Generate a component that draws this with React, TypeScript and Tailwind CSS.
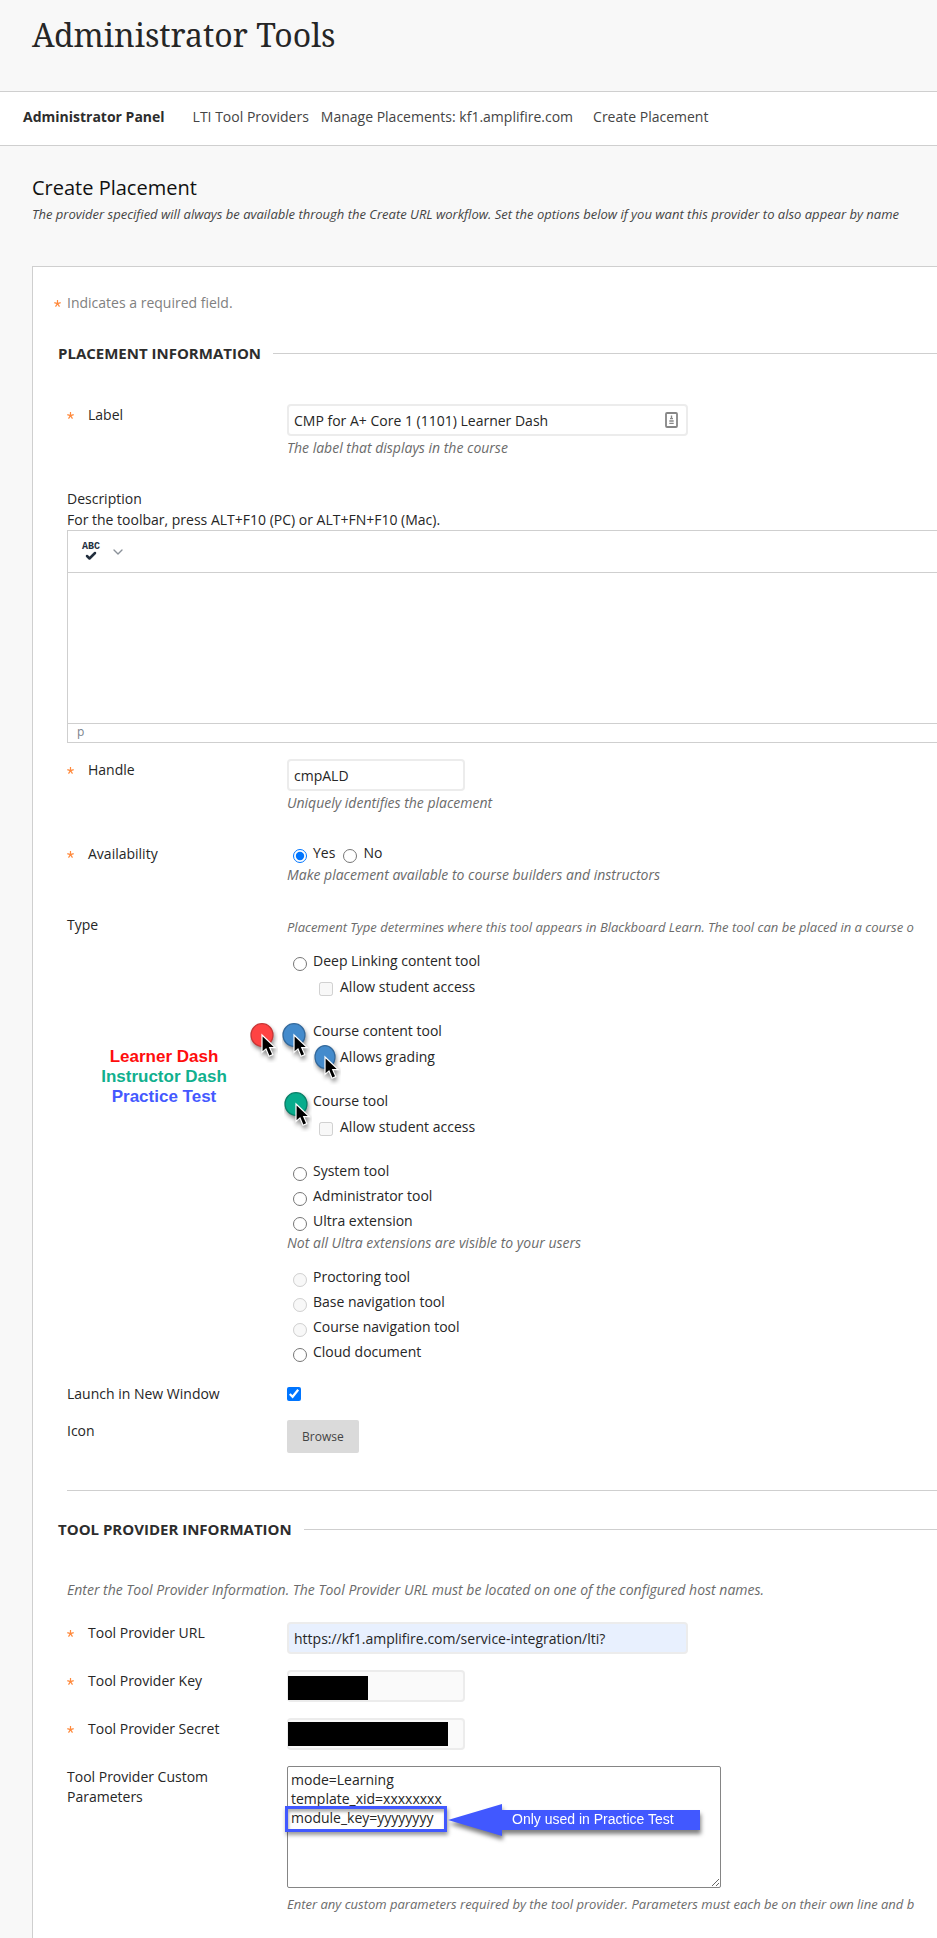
import { ReactNode } from "react";
import { Check, ChevronDown } from "lucide-react";

const inputClass =
  "block h-8 rounded border-2 border-[#ececec] px-[5px] text-sm text-[#262626] outline-none";

function Star() {
  return (
    <svg width="7" height="7" viewBox="0 0 7 7" className="shrink-0" role="img" aria-label="required">
      <path d="M3.5 0v3.6M0.3 2.6l3.2 1M6.7 2.6l-3.2 1M1.5 6.6l2-3M5.5 6.6l-2-3" stroke="#ff8a3d" strokeWidth="1.2" />
    </svg>
  );
}

function Row({ label, htmlFor, required, className, children }: { label: string; htmlFor?: string; required?: boolean; className?: string; children: ReactNode }) {
  return (
    <div className={`flex ${className ?? ""}`}>
      <label htmlFor={htmlFor} className="flex w-[220px] shrink-0 pt-px">
        {required && (
          <span className="flex h-5 w-[21px] shrink-0 items-center">
            <Star />
          </span>
        )}
        <span className="w-[170px]">{label}</span>
      </label>
      <div className="min-w-0 flex-1">{children}</div>
    </div>
  );
}

function Help({ children, small }: { children: ReactNode; small?: boolean }) {
  return <p className={`mt-0.5 whitespace-nowrap italic text-[#6b6b6b] ${small ? "text-[13px] leading-5" : ""}`}>{children}</p>;
}

function SectionTitle({ children }: { children: ReactNode }) {
  return (
    <div className="ml-[25px] flex items-center gap-3">
      <h3 className="text-[15px] font-bold text-[#2d2d2d]">{children}</h3>
      <div className="h-px flex-1 bg-[#cfcfcf]" />
    </div>
  );
}

function Radio({ label, name = "type", disabled, checked, marker }: { label: string; name?: string; disabled?: boolean; checked?: boolean; marker?: ReactNode }) {
  return (
    <label className="relative flex h-5 items-center gap-1.5 pl-1.5">
      <input
        type="radio"
        name={name}
        disabled={disabled}
        defaultChecked={checked}
        className={`mt-[5px] size-[14px] accent-[#0075ff] ${marker ? "opacity-0" : ""}`}
      />
      {label}
      {marker}
    </label>
  );
}

function SubCheck({ label, marker }: { label: string; marker?: ReactNode }) {
  return (
    <label className="relative mt-1.5 flex h-5 items-center gap-[7px] pl-8">
      <input type="checkbox" disabled={!marker} className={`mt-[3px] size-[14px] ${marker ? "opacity-0" : ""}`} />
      {label}
      {marker}
    </label>
  );
}

// Click marker: coloured dot with a mouse pointer on it
function Marker({ fill, stroke, rx = 11, className }: { fill: string; stroke: string; rx?: number; className: string }) {
  return (
    <svg width="28" height="40" viewBox="0 0 28 40" aria-hidden="true" className={`absolute ${className}`}>
      <g className="drop-shadow-[1px_3px_2px_rgba(0,0,0,0.45)]">
        <ellipse cx="12" cy="12" rx={rx} ry="11.3" fill={fill} stroke={stroke} strokeWidth="1.2" />
        <path d="M12 12v17.5l4-3.6 3 7.4 3.8-1.7-3.1-7h5.5z" fill="#000" stroke="#fff" strokeWidth="1.2" />
      </g>
    </svg>
  );
}

export default function App() {
  return (
    <div className="flex min-h-screen flex-col overflow-hidden bg-[#f8f8f8] font-['Open_Sans',sans-serif] text-sm leading-5 text-[#262626]">
      {/* Header */}
      <header className="border-b border-[#cfcfcf] px-8 pt-[11px] pb-8">
        <h1 className="font-['Noto_Serif','DejaVu_Serif_Condensed','DejaVu_Serif',serif] text-[32px] leading-[48px]">Administrator Tools</h1>
      </header>

      {/* Breadcrumb */}
      <nav className="flex border-b border-[#cfcfcf] bg-white px-[23px] pt-[15px] pb-[18px] whitespace-nowrap text-[#444]">
        <a href="#" className="mr-7 font-bold text-[#2d2d2d]">Administrator Panel</a>
        <a href="#" className="mr-3">LTI Tool Providers</a>
        <a href="#" className="mr-5">Manage Placements: kf1.amplifire.com</a>
        <a href="#">Create Placement</a>
      </nav>

      <main className="flex flex-1 flex-col pt-7 pl-8">
        <h2 className="text-xl leading-7 text-[#111]">Create Placement</h2>
        <p className="mt-0.5 text-[13px] leading-5 whitespace-nowrap italic text-[#444]">
          The provider specified will always be available through the Create URL workflow. Set the options below if you want this provider to also appear by name
        </p>

        <form className="mt-[42px] flex-1 border-t border-l border-[#cfcfcf] bg-white pt-[26px] pb-5">
          <p className="ml-[21px] flex items-center gap-1.5 text-[#808080]">
            <Star />
            Indicates a required field.
          </p>

          {/* Placement information */}
          <div className="mt-[30px]">
            <SectionTitle>PLACEMENT INFORMATION</SectionTitle>
          </div>
          <div className="mt-[41px] pl-[34px]">
            <Row label="Label" htmlFor="label" required>
              <div className="relative w-[401px]">
                <input id="label" defaultValue="CMP for A+ Core 1 (1101) Learner Dash" className={`${inputClass} w-full bg-white`} />
                <svg width="13" height="16" viewBox="0 0 13 16" className="absolute top-2 right-2.5" aria-hidden="true">
                  <rect x="1" y="1" width="11" height="14" rx="1" fill="#fff" stroke="#868686" strokeWidth="1.8" />
                  <path d="M6.5 3.5v3M5 6.6h3M4.3 9h4.4M4.3 11.4h4.4" stroke="#868686" strokeWidth="1.4" />
                </svg>
              </div>
              <Help>The label that displays in the course</Help>
            </Row>

            <div className="mt-[31px]">
              <label htmlFor="description">Description</label>
              <p className="mt-px">For the toolbar, press ALT+F10 (PC) or ALT+FN+F10 (Mac).</p>
              <div className="border border-r-0 border-[#cfcfcf]">
                <div className="flex h-[42px] items-center gap-2.5 border-b border-[#cfcfcf] pl-3.5">
                  <button type="button" className="flex flex-col items-center text-[#222f3e]">
                    <span className="font-['Liberation_Mono',monospace] text-[10px] leading-[9px] font-bold">ABC</span>
                    <Check size={12} strokeWidth={5} className="-mt-px" />
                  </button>
                  <button type="button" aria-label="More spelling options">
                    <ChevronDown size={16} className="text-[#8a9199]" />
                  </button>
                </div>
                <textarea id="description" className="block h-[150px] w-full resize-none outline-none" />
                <div className="h-[19px] border-t border-[#cfcfcf] pl-[9px] text-xs leading-[16px] text-[#7a828c]">p</div>
              </div>
            </div>

            <Row label="Handle" htmlFor="handle" required className="mt-4">
              <input id="handle" defaultValue="cmpALD" className={`${inputClass} w-[178px] bg-white`} />
              <Help>Uniquely identifies the placement</Help>
            </Row>

            <Row label="Availability" required className="mt-[30px]">
              <div className="flex gap-0.5">
                <Radio label="Yes" name="availability" checked />
                <Radio label="No" name="availability" />
              </div>
              <Help>Make placement available to course builders and instructors</Help>
            </Row>

            <div className="mt-[30px] flex">
              <div className="w-[220px] shrink-0">
                <p>Type</p>
                <div className="mt-[112px] w-[194px] text-center font-['Liberation_Sans',sans-serif] text-[17px] leading-5 font-bold">
                  <p className="text-[#ff0d0d]">Learner Dash</p>
                  <p className="text-[#10b08e]">Instructor Dash</p>
                  <p className="text-[#4459ff]">Practice Test</p>
                </div>
              </div>
              <div className="min-w-0 flex-1">
                <Help small>Placement Type determines where this tool appears in Blackboard Learn. The tool can be placed in a course o</Help>
                <div className="mt-3.5 flex flex-col gap-6">
                  <div>
                    <Radio label="Deep Linking content tool" />
                    <SubCheck label="Allow student access" />
                  </div>
                  <div>
                    <Radio
                      label="Course content tool"
                      marker={
                        <>
                          <Marker fill="#ff4343" stroke="#c93636" className="top-0.5 -left-[37px]" />
                          <Marker fill="#448bcc" stroke="#33699c" className="top-0.5 -left-[5px]" />
                        </>
                      }
                    />
                    <SubCheck label="Allows grading" marker={<Marker fill="#448bcc" stroke="#33699c" rx={10} className="-top-0.5 left-[26px]" />} />
                  </div>
                  <div>
                    <Radio label="Course tool" marker={<Marker fill="#08ac8c" stroke="#0a7f68" className="top-px -left-[3px]" />} />
                    <SubCheck label="Allow student access" />
                  </div>
                  <div className="flex flex-col gap-[5px]">
                    <Radio label="System tool" />
                    <Radio label="Administrator tool" />
                    <Radio label="Ultra extension" />
                  </div>
                </div>
                <Help>Not all Ultra extensions are visible to your users</Help>
                <div className="mt-3.5 flex flex-col gap-[5px]">
                  <Radio label="Proctoring tool" disabled />
                  <Radio label="Base navigation tool" disabled />
                  <Radio label="Course navigation tool" disabled />
                  <Radio label="Cloud document" />
                </div>
              </div>
            </div>

            <Row label="Launch in New Window" htmlFor="launch" className="mt-[21px]">
              <input id="launch" type="checkbox" defaultChecked className="mt-1 block size-[14px] accent-[#0075ff]" />
            </Row>
            <Row label="Icon" htmlFor="icon" className="mt-4">
              <button id="icon" type="button" className="block h-[33px] rounded-xs bg-[#dadada] px-[15px] text-xs text-[#444]">Browse</button>
            </Row>
            <hr className="mt-[37px] border-[#cfcfcf]" />
          </div>

          {/* Tool provider information */}
          <div className="mt-7">
            <SectionTitle>TOOL PROVIDER INFORMATION</SectionTitle>
          </div>
          <div className="mt-[41px] pl-[34px]">
            <Help>Enter the Tool Provider Information. The Tool Provider URL must be located on one of the configured host names.</Help>
            <div className="mt-[22px] flex flex-col gap-4">
              <Row label="Tool Provider URL" htmlFor="url" required>
                <input id="url" defaultValue="https://kf1.amplifire.com/service-integration/lti?" className={`${inputClass} w-[401px] bg-[#e8f0fe]`} />
              </Row>
              <Row label="Tool Provider Key" htmlFor="key" required>
                <div className="relative w-[178px]">
                  <input id="key" className={`${inputClass} w-full bg-[#fafafa]`} />
                  <div className="absolute top-1.5 left-px h-6 w-20 bg-black" />
                </div>
              </Row>
              <Row label="Tool Provider Secret" htmlFor="secret" required>
                <div className="relative w-[178px]">
                  <input id="secret" className={`${inputClass} w-full bg-[#fafafa]`} />
                  <div className="absolute top-1 left-px h-6 w-40 bg-black" />
                </div>
              </Row>
              <Row label="Tool Provider Custom Parameters" htmlFor="params">
                <div className="relative w-[434px]">
                  <textarea
                    id="params"
                    defaultValue={"mode=Learning\ntemplate_xid=xxxxxxxx\nmodule_key=yyyyyyyy"}
                    className="block h-[122px] w-full rounded-xs border border-[#858585] px-[3px] py-[3px] text-sm leading-[19px] outline-none"
                  />
                  <div className="pointer-events-none absolute top-10 -left-0.5 h-[26px] w-[162px] border-3 border-[#4158ff] shadow-[1px_3px_4px_rgba(0,0,0,0.4),inset_1px_3px_3px_rgba(0,0,0,0.3)]" />
                  <div className="pointer-events-none absolute top-[38px] left-[161px] flex items-center drop-shadow-[1px_4px_2px_rgba(0,0,0,0.5)]">
                    <svg width="54" height="32" viewBox="0 0 54 32" aria-hidden="true">
                      <path d="M0 16 54 0v32z" fill="#4158ff" />
                    </svg>
                    <span className="h-5 w-[198px] bg-[#4158ff] pl-2.5 font-['Liberation_Sans',sans-serif] leading-[18px] text-white">Only used in Practice Test</span>
                  </div>
                </div>
                <p className="mt-1.5 text-[13px] leading-5 whitespace-nowrap italic text-[#6b6b6b]">
                  Enter any custom parameters required by the tool provider. Parameters must each be on their own line and b
                </p>
              </Row>
            </div>
          </div>
        </form>
      </main>
    </div>
  );
}
